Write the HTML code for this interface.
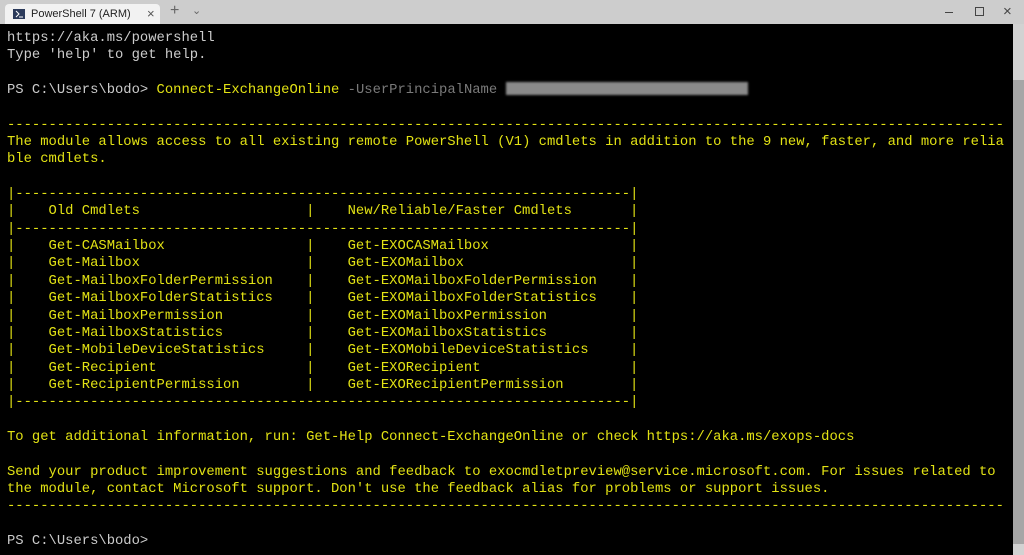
<!DOCTYPE html>
<html><head><meta charset="utf-8"><style>
html,body{margin:0;padding:0;width:1024px;height:555px;overflow:hidden;background:#cdcdcd;font-family:"Liberation Sans",sans-serif}
#title{position:absolute;left:0;top:0;width:1024px;height:24px;background:#cdcdcd}
#tab{position:absolute;left:5px;top:4px;width:155px;height:20px;background:#f2f2f2;border-radius:4px 4px 0 0;font-size:11px;color:#222}
#tab span{position:absolute;left:26px;top:4px}
#term{position:absolute;left:0;top:24px;width:1013px;height:531px;background:#000}
#sb{position:absolute;left:1013px;top:24px;width:11px;height:531px;background:#d2d2d2}
#thumb{position:absolute;left:1013px;top:80px;width:11px;height:464px;background:#a6a6a6}
pre{position:absolute;left:7px;top:30px;margin:0;font-family:"Liberation Mono",monospace;font-size:13.85px;line-height:17.34px;color:#cccccc}
.y{color:#e2e214}.g{color:#7a7a7a}
.c1{display:inline-block;width:36ch}.c2{display:inline-block;width:39ch}
.blur{display:inline-block;width:242px;height:13px;background:#8a8a8a;vertical-align:-2px;filter:blur(1px)}
</style></head><body>
<div id="title">
<div id="tab"><svg style="position:absolute;left:8px;top:5px" width="12" height="10"><rect width="12" height="10" fill="#2b3a5a"/><path d="M3 2l3 3-3 3" stroke="#fff" fill="none"/><path d="M6 8h4" stroke="#fff"/></svg><span>PowerShell 7 (ARM)</span><span style="left:142px;top:2px;font-size:13px;color:#555">×</span></div>
<span style="position:absolute;left:170px;top:2px;font-size:16px;color:#666">+</span>
<span style="position:absolute;left:192px;top:4px;font-size:11px;color:#666">⌄</span>
<div style="position:absolute;left:945px;top:12px;width:8px;height:1px;background:#444"></div>
<div style="position:absolute;left:975px;top:7px;width:7px;height:7px;border:1px solid #444"></div>
<span style="position:absolute;left:1003px;top:3px;font-size:15px;color:#444">×</span>
</div>
<div id="term"></div><div id="sb"></div><div id="thumb"></div>
<pre>https://aka.ms/powershell
Type 'help' to get help.

PS C:\Users\bodo&gt; <span class="y">Connect-ExchangeOnline</span> <span class="g">-UserPrincipalName</span> <span class="blur"></span>
<span class="y">
------------------------------------------------------------------------------------------------------------------------
The module allows access to all existing remote PowerShell (V1) cmdlets in addition to the 9 new, faster, and more relia
ble cmdlets.

|--------------------------------------------------------------------------|
<span class="c1">|    Old Cmdlets</span><span class="c2">|    New/Reliable/Faster Cmdlets</span>|
|--------------------------------------------------------------------------|
<span class="c1">|    Get-CASMailbox</span><span class="c2">|    Get-EXOCASMailbox</span>|
<span class="c1">|    Get-Mailbox</span><span class="c2">|    Get-EXOMailbox</span>|
<span class="c1">|    Get-MailboxFolderPermission</span><span class="c2">|    Get-EXOMailboxFolderPermission</span>|
<span class="c1">|    Get-MailboxFolderStatistics</span><span class="c2">|    Get-EXOMailboxFolderStatistics</span>|
<span class="c1">|    Get-MailboxPermission</span><span class="c2">|    Get-EXOMailboxPermission</span>|
<span class="c1">|    Get-MailboxStatistics</span><span class="c2">|    Get-EXOMailboxStatistics</span>|
<span class="c1">|    Get-MobileDeviceStatistics</span><span class="c2">|    Get-EXOMobileDeviceStatistics</span>|
<span class="c1">|    Get-Recipient</span><span class="c2">|    Get-EXORecipient</span>|
<span class="c1">|    Get-RecipientPermission</span><span class="c2">|    Get-EXORecipientPermission</span>|
|--------------------------------------------------------------------------|

To get additional information, run: Get-Help Connect-ExchangeOnline or check https://aka.ms/exops-docs

Send your product improvement suggestions and feedback to exocmdletpreview@service.microsoft.com. For issues related to
the module, contact Microsoft support. Don't use the feedback alias for problems or support issues.
------------------------------------------------------------------------------------------------------------------------
</span>
PS C:\Users\bodo&gt;</pre>
</body></html>
